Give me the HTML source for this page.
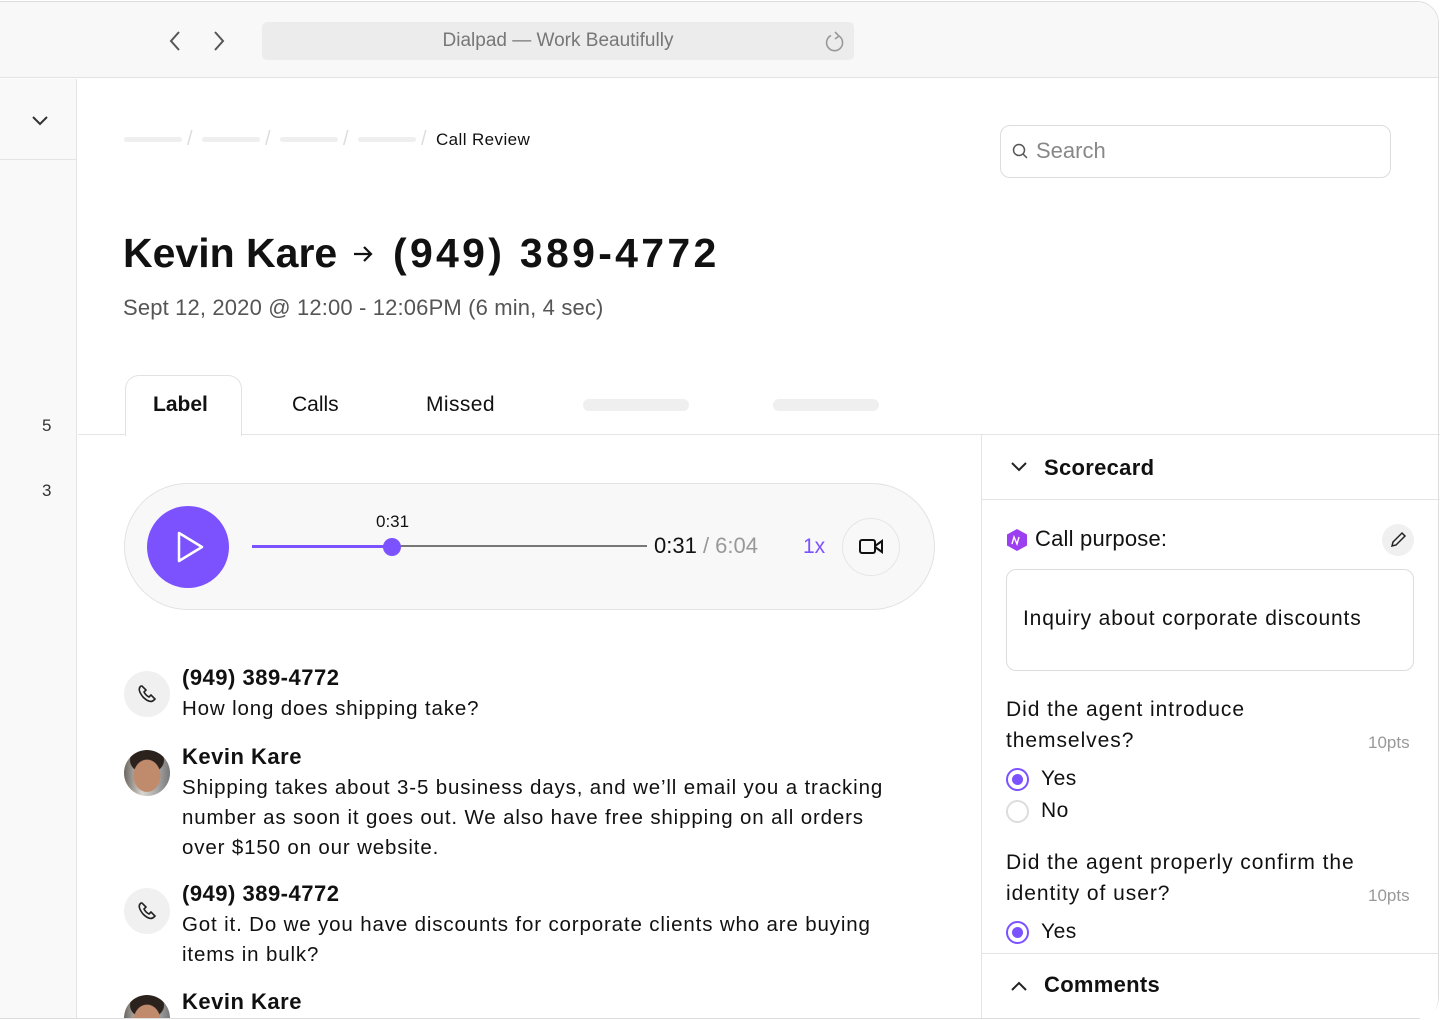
<!DOCTYPE html>
<html><head><meta charset="utf-8"><style>
*{box-sizing:border-box;margin:0;padding:0}
html,body{width:1440px;height:1020px;overflow:hidden}
body{background:#fff;font-family:"Liberation Sans",Arial,sans-serif;color:#111;position:relative}
.clip{position:absolute;left:0;top:0;width:1440px;height:1018px;overflow:hidden}
.win{position:absolute;left:-2px;top:1px;width:1441px;height:1018px;border:1px solid #ddd;border-radius:0 22px 22px 0;overflow:hidden;background:#fff}
.top{position:absolute;left:0;top:0;width:100%;height:76px;background:#f8f8f8;border-bottom:1px solid #e2e2e2}
.url{position:absolute;left:263px;top:20px;width:592px;height:38px;background:#ececec;border-radius:5px;text-align:center;line-height:38px;font-size:19px;color:#777}
.side{position:absolute;left:0;top:77px;width:78px;height:950px;background:#f9f9f9;border-right:1px solid #e4e4e4}
.abs{position:absolute}
.bc{height:5px;width:58px;background:#efefef;border-radius:3px;top:137px}
.sl{color:#ddd;font-size:20px;top:128px}
.tabline{position:absolute;left:78px;top:434px;width:1370px;border-top:1px solid #e4e4e4}
.tab{position:absolute;left:125px;top:375px;width:117px;height:61px;border:1px solid #e2e2e2;border-bottom:none;border-radius:14px 14px 0 0;background:#fff}
.t{font-size:21px;top:393px}
.ph{position:absolute;top:399px;width:106px;height:12px;border-radius:6px;background:#efefef}
.player{position:absolute;left:124px;top:483px;width:811px;height:127px;border:1px solid #e2e2e2;border-radius:64px;background:#f8f8f8}
.msg{position:absolute;left:182px;font-size:20.5px;line-height:30px;color:#111;letter-spacing:0.85px;white-space:nowrap}
.msg b{font-size:22px;letter-spacing:0.5px}
.ic{position:absolute;left:124px;width:46px;height:46px;border-radius:50%;background:#f0f0f0}
.av{position:absolute;left:124px;width:46px;height:46px;border-radius:50%;background:radial-gradient(ellipse 30% 36% at 50% 56%,#c08a6c 0 95%,transparent 100%),radial-gradient(ellipse 38% 30% at 50% 22%,#2b221e 0 95%,transparent 100%),linear-gradient(90deg,#6b6660,#d9d6d0 40%,#aaa 70%,#777)}
.rp{position:absolute;left:981px;top:435px;width:470px;height:600px;border-left:1px solid #e4e4e4}
.q{position:absolute;left:1006px;font-size:21px;line-height:31px;width:400px;letter-spacing:0.95px}
.pts{position:absolute;left:1368px;font-size:17px;color:#999}
.r{position:absolute;left:1006px;width:23px;height:23px;border-radius:50%;border:2px solid #ddd}
.r.on{border-color:#7c52ff}
.r.on::after{content:"";position:absolute;left:4px;top:4px;width:11px;height:11px;border-radius:50%;background:#7c52ff}
.rl{position:absolute;left:1041px;font-size:21px;letter-spacing:0.5px}
</style></head><body>
<div class="clip">
<div class="win">
<div class="top">
<svg class="abs" style="left:166px;top:28px" width="70" height="22" viewBox="0 0 70 22"><path d="M14 2 L6 11 L14 20" stroke="#555" stroke-width="2" fill="none"/><path d="M50 2 L58 11 L50 20" stroke="#555" stroke-width="2" fill="none"/></svg>
<div class="url">Dialpad — Work Beautifully</div>
<svg class="abs" style="left:825px;top:29px" width="22" height="22" viewBox="0 0 22 22"><path d="M15 5 A8 8 0 1 1 7 4.5" stroke="#999" stroke-width="1.6" fill="none"/><path d="M11 1 L15 5 L11 8" stroke="#999" stroke-width="1.6" fill="none"/></svg>
</div>
<div class="side">
<div style="position:absolute;top:80px;left:0;width:78px;border-top:1px solid #e4e4e4"></div>
<svg class="abs" style="left:32px;top:36px" width="18" height="12"><path d="M2 2 L9 9 L16 2" stroke="#333" stroke-width="2" fill="none"/></svg>
<div class="abs" style="left:43px;top:337px;font-size:17px;color:#333">5</div>
<div class="abs" style="left:43px;top:402px;font-size:17px;color:#333">3</div>
</div>
</div>
<div class="abs bc" style="left:124px"></div><div class="abs sl" style="left:187px">/</div>
<div class="abs bc" style="left:202px"></div><div class="abs sl" style="left:265px">/</div>
<div class="abs bc" style="left:280px"></div><div class="abs sl" style="left:343px">/</div>
<div class="abs bc" style="left:358px"></div><div class="abs sl" style="left:421px">/</div>
<div class="abs" style="left:436px;top:130px;font-size:17px;letter-spacing:0.4px">Call Review</div>
<div class="abs" style="left:1000px;top:125px;width:391px;height:53px;border:1px solid #ddd;border-radius:10px"></div>
<svg class="abs" style="left:1012px;top:143px" width="16" height="16"><circle cx="7" cy="7" r="5.5" stroke="#555" stroke-width="1.5" fill="none"/><path d="M11 11 L15 15" stroke="#555" stroke-width="1.5"/></svg>
<div class="abs" style="left:1036px;top:138px;font-size:22px;color:#888">Search</div>
<div class="abs" style="left:123px;top:230px;font-size:41px;font-weight:bold;white-space:nowrap">Kevin Kare</div>
<svg class="abs" style="left:352px;top:244px" width="22" height="20"><path d="M2 10 L19 10 M12 3 L19 10 L12 17" stroke="#111" stroke-width="2.2" fill="none"/></svg>
<div class="abs" style="left:393px;top:230px;font-size:41px;font-weight:bold;letter-spacing:3.3px;white-space:nowrap">(949) 389-4772</div>
<div class="abs" style="left:123px;top:295px;font-size:22px;color:#555;letter-spacing:0.15px">Sept 12, 2020 @ 12:00 - 12:06PM (6 min, 4 sec)</div>
<div class="tabline"></div>
<div class="tab"></div>
<div class="abs t" style="left:153px;font-weight:bold">Label</div>
<div class="abs t" style="left:292px">Calls</div>
<div class="abs t" style="left:426px;letter-spacing:0.4px">Missed</div>
<div class="ph" style="left:583px"></div><div class="ph" style="left:773px"></div>
<div class="player"></div>
<div class="abs" style="left:147px;top:506px;width:82px;height:82px;border-radius:50%;background:#7c52ff"></div>
<svg class="abs" style="left:176px;top:531px" width="30" height="32"><path d="M3 2 L26 16 L3 30 Z" stroke="#fff" stroke-width="2.5" fill="none" stroke-linejoin="round"/></svg>
<div class="abs" style="left:252px;top:545px;width:140px;height:3px;background:#7c52ff"></div>
<div class="abs" style="left:392px;top:545px;width:255px;height:2px;background:#777"></div>
<div class="abs" style="left:383px;top:538px;width:18px;height:18px;border-radius:50%;background:#7c52ff"></div>
<div class="abs" style="left:376px;top:512px;font-size:17px">0:31</div>
<div class="abs" style="left:654px;top:533px;font-size:22px">0:31<span style="color:#999"> / 6:04</span></div>
<div class="abs" style="left:803px;top:535px;font-size:21px;color:#7c52ff">1x</div>
<div class="abs" style="left:842px;top:518px;width:58px;height:58px;border-radius:50%;border:1px solid #e6e6e6"></div>
<svg class="abs" style="left:859px;top:538px" width="26" height="18"><rect x="1" y="2" width="15" height="13" rx="2" stroke="#111" stroke-width="2" fill="none"/><path d="M16 8 L23 3 L23 14 L16 9" stroke="#111" stroke-width="2" fill="none"/></svg>

<div class="ic" style="top:671px"></div>
<svg class="abs" style="left:137px;top:684px" width="20" height="20"><path d="M4 2 C1 4 2 8 6 13 C10 17 14 19 17 16 L18 15 L14 11 L12 13 C10 12 8 10 7 8 L9 6 L5 2 Z" stroke="#222" stroke-width="1.6" fill="none"/></svg>
<div class="msg" style="top:663px"><b>(949) 389-4772</b><br>How long does shipping take?</div>
<div class="av" style="top:750px"></div>
<div class="msg" style="top:742px"><b>Kevin Kare</b><br>Shipping takes about 3-5 business days, and we’ll email you a tracking<br>number as soon it goes out. We also have free shipping on all orders<br>over $150 on our website.</div>
<div class="ic" style="top:888px"></div>
<svg class="abs" style="left:137px;top:901px" width="20" height="20"><path d="M4 2 C1 4 2 8 6 13 C10 17 14 19 17 16 L18 15 L14 11 L12 13 C10 12 8 10 7 8 L9 6 L5 2 Z" stroke="#222" stroke-width="1.6" fill="none"/></svg>
<div class="msg" style="top:879px"><b>(949) 389-4772</b><br>Got it. Do we you have discounts for corporate clients who are buying<br>items in bulk?</div>
<div class="av" style="top:995px"></div>
<div class="msg" style="top:987px"><b>Kevin Kare</b></div>

<div class="rp"></div>
<div class="abs" style="left:982px;top:499px;width:460px;border-top:1px solid #e4e4e4"></div>
<svg class="abs" style="left:1010px;top:461px" width="18" height="12"><path d="M2 2 L9 9 L16 2" stroke="#222" stroke-width="2" fill="none"/></svg>
<div class="abs" style="left:1044px;top:455px;font-size:22px;font-weight:bold;letter-spacing:0.3px">Scorecard</div>
<svg class="abs" style="left:1006px;top:528px" width="22" height="24"><path d="M11 1 L21 6.5 L21 17.5 L11 23 L1 17.5 L1 6.5 Z" fill="#9b3ff0"/><path d="M6 16 L8 9 L11 16 L13 9" stroke="#fff" stroke-width="1.4" fill="none"/></svg>
<div class="abs" style="left:1035px;top:526px;font-size:22px;letter-spacing:0.2px">Call purpose:</div>
<div class="abs" style="left:1382px;top:524px;width:32px;height:32px;border-radius:50%;background:#f0f0f0"></div>
<svg class="abs" style="left:1389px;top:531px" width="18" height="18"><path d="M3 15 L4 11 L13 2 L16 5 L7 14 Z" stroke="#222" stroke-width="1.5" fill="none"/></svg>
<div class="abs" style="left:1006px;top:569px;width:408px;height:102px;border:1px solid #ddd;border-radius:10px"></div>
<div class="abs" style="left:1023px;top:607px;font-size:21px;letter-spacing:0.85px">Inquiry about corporate discounts</div>
<div class="q" style="top:694px">Did the agent introduce<br>themselves?</div>
<div class="pts" style="top:733px">10pts</div>
<div class="r on" style="top:768px"></div><div class="rl" style="top:767px">Yes</div>
<div class="r" style="top:800px"></div><div class="rl" style="top:799px">No</div>
<div class="q" style="top:847px">Did the agent properly confirm the<br>identity of user?</div>
<div class="pts" style="top:886px">10pts</div>
<div class="r on" style="top:921px"></div><div class="rl" style="top:920px">Yes</div>
<div class="abs" style="left:982px;top:953px;width:456px;height:66px;border-top:1px solid #e4e4e4;background:#fff;border-radius:0 0 20px 0"></div>
<svg class="abs" style="left:1010px;top:980px" width="18" height="12"><path d="M2 10 L9 3 L16 10" stroke="#222" stroke-width="2" fill="none"/></svg>
<div class="abs" style="left:1044px;top:972px;font-size:22px;font-weight:bold;letter-spacing:0.3px">Comments</div>
</div>
<div class="abs" style="left:0;top:1018px;width:1420px;border-top:1px solid #ddd"></div>
</body></html>
